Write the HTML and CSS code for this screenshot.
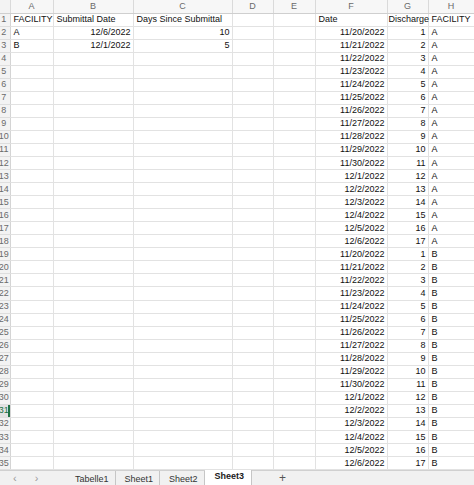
FILE: index.html
```html
<!DOCTYPE html>
<html>
<head>
<meta charset="utf-8">
<link rel="stylesheet" href="styles.css">
</head>
<body>
<div class="app">
<table class="grid">
<colgroup><col class="c0"><col class="ca"><col class="cb"><col class="cc"><col class="cd"><col class="ce"><col class="cf"><col class="cg"><col class="ch"></colgroup>
<thead><tr class="hdr"><th class="corner"></th><th>A</th><th>B</th><th>C</th><th>D</th><th>E</th><th>F</th><th>G</th><th>H</th></tr></thead>
<tbody>
<tr><th>1</th><td>FACILITY</td><td>Submittal Date</td><td>Days Since Submittal</td><td></td><td></td><td>Date</td><td class="tight">Discharge</td><td>FACILITY</td></tr>
<tr><th>2</th><td>A</td><td class="n">12/6/2022</td><td class="n">10</td><td></td><td></td><td class="n">11/20/2022</td><td class="n">1</td><td>A</td></tr>
<tr><th>3</th><td>B</td><td class="n">12/1/2022</td><td class="n">5</td><td></td><td></td><td class="n">11/21/2022</td><td class="n">2</td><td>A</td></tr>
<tr><th>4</th><td></td><td></td><td></td><td></td><td></td><td class="n">11/22/2022</td><td class="n">3</td><td>A</td></tr>
<tr><th>5</th><td></td><td></td><td></td><td></td><td></td><td class="n">11/23/2022</td><td class="n">4</td><td>A</td></tr>
<tr><th>6</th><td></td><td></td><td></td><td></td><td></td><td class="n">11/24/2022</td><td class="n">5</td><td>A</td></tr>
<tr><th>7</th><td></td><td></td><td></td><td></td><td></td><td class="n">11/25/2022</td><td class="n">6</td><td>A</td></tr>
<tr><th>8</th><td></td><td></td><td></td><td></td><td></td><td class="n">11/26/2022</td><td class="n">7</td><td>A</td></tr>
<tr><th>9</th><td></td><td></td><td></td><td></td><td></td><td class="n">11/27/2022</td><td class="n">8</td><td>A</td></tr>
<tr><th>10</th><td></td><td></td><td></td><td></td><td></td><td class="n">11/28/2022</td><td class="n">9</td><td>A</td></tr>
<tr><th>11</th><td></td><td></td><td></td><td></td><td></td><td class="n">11/29/2022</td><td class="n">10</td><td>A</td></tr>
<tr><th>12</th><td></td><td></td><td></td><td></td><td></td><td class="n">11/30/2022</td><td class="n">11</td><td>A</td></tr>
<tr><th>13</th><td></td><td></td><td></td><td></td><td></td><td class="n">12/1/2022</td><td class="n">12</td><td>A</td></tr>
<tr><th>14</th><td></td><td></td><td></td><td></td><td></td><td class="n">12/2/2022</td><td class="n">13</td><td>A</td></tr>
<tr><th>15</th><td></td><td></td><td></td><td></td><td></td><td class="n">12/3/2022</td><td class="n">14</td><td>A</td></tr>
<tr><th>16</th><td></td><td></td><td></td><td></td><td></td><td class="n">12/4/2022</td><td class="n">15</td><td>A</td></tr>
<tr><th>17</th><td></td><td></td><td></td><td></td><td></td><td class="n">12/5/2022</td><td class="n">16</td><td>A</td></tr>
<tr><th>18</th><td></td><td></td><td></td><td></td><td></td><td class="n">12/6/2022</td><td class="n">17</td><td>A</td></tr>
<tr><th>19</th><td></td><td></td><td></td><td></td><td></td><td class="n">11/20/2022</td><td class="n">1</td><td>B</td></tr>
<tr><th>20</th><td></td><td></td><td></td><td></td><td></td><td class="n">11/21/2022</td><td class="n">2</td><td>B</td></tr>
<tr><th>21</th><td></td><td></td><td></td><td></td><td></td><td class="n">11/22/2022</td><td class="n">3</td><td>B</td></tr>
<tr><th>22</th><td></td><td></td><td></td><td></td><td></td><td class="n">11/23/2022</td><td class="n">4</td><td>B</td></tr>
<tr><th>23</th><td></td><td></td><td></td><td></td><td></td><td class="n">11/24/2022</td><td class="n">5</td><td>B</td></tr>
<tr><th>24</th><td></td><td></td><td></td><td></td><td></td><td class="n">11/25/2022</td><td class="n">6</td><td>B</td></tr>
<tr><th>25</th><td></td><td></td><td></td><td></td><td></td><td class="n">11/26/2022</td><td class="n">7</td><td>B</td></tr>
<tr><th>26</th><td></td><td></td><td></td><td></td><td></td><td class="n">11/27/2022</td><td class="n">8</td><td>B</td></tr>
<tr><th>27</th><td></td><td></td><td></td><td></td><td></td><td class="n">11/28/2022</td><td class="n">9</td><td>B</td></tr>
<tr><th>28</th><td></td><td></td><td></td><td></td><td></td><td class="n">11/29/2022</td><td class="n">10</td><td>B</td></tr>
<tr><th>29</th><td></td><td></td><td></td><td></td><td></td><td class="n">11/30/2022</td><td class="n">11</td><td>B</td></tr>
<tr><th>30</th><td></td><td></td><td></td><td></td><td></td><td class="n">12/1/2022</td><td class="n">12</td><td>B</td></tr>
<tr><th class="sel">31</th><td></td><td></td><td></td><td></td><td></td><td class="n">12/2/2022</td><td class="n">13</td><td>B</td></tr>
<tr><th>32</th><td></td><td></td><td></td><td></td><td></td><td class="n">12/3/2022</td><td class="n">14</td><td>B</td></tr>
<tr><th>33</th><td></td><td></td><td></td><td></td><td></td><td class="n">12/4/2022</td><td class="n">15</td><td>B</td></tr>
<tr><th>34</th><td></td><td></td><td></td><td></td><td></td><td class="n">12/5/2022</td><td class="n">16</td><td>B</td></tr>
<tr><th>35</th><td></td><td></td><td></td><td></td><td></td><td class="n">12/6/2022</td><td class="n">17</td><td>B</td></tr>
</tbody>
</table>
<div class="tabbar">
  <div class="nav"><span class="arrow">‹</span><span class="arrow">›</span></div>
  <div class="tab">Tabelle1</div>
  <div class="tab">Sheet1</div>
  <div class="tab">Sheet2</div>
  <div class="tab active">Sheet3</div>
  <div class="add">+</div>
</div>
</div>
</body>
</html>
```
FILE: styles.css
```css
html, body {
  margin: 0;
  padding: 0;
  background: #ffffff;
}
body {
  width: 474px;
  height: 485px;
  overflow: hidden;
  font-family: "Liberation Sans", Arial, sans-serif;
  font-size: 9px;
  color: #111;
}
.app {
  display: flex;
  flex-direction: column;
  width: 474px;
  height: 485px;
  overflow: hidden;
}
.grid {
  border-collapse: collapse;
  table-layout: fixed;
  width: 476px;
  margin-left: -2px;
  flex: none;
}
.c0 { width: 12px; }
.ca { width: 43px; }
.cb { width: 80px; }
.cc { width: 99px; }
.cd { width: 41px; }
.ce { width: 42px; }
.cf { width: 72px; }
.cg { width: 41px; }
.ch { width: 46px; }

.grid tbody tr { height: 13.06px; }
.grid td, .grid th {
  padding: 0 2px 0 3px;
  height: 12px;
  line-height: 11px;
  white-space: nowrap;
  overflow: hidden;
  border-right: 1px solid #e2e2e2;
  border-bottom: 1px solid #e2e2e2;
  font-weight: normal;
  text-align: left;
  box-sizing: border-box;
}
.grid td.n { text-align: right; }
.grid td.tight { padding-left: 1px; overflow: visible; }
.grid tbody th {
  padding: 0;
  text-align: center;
  color: #6a6a6a;
  background: #f3f3f3;
  border-right: 1px solid #d4d4d4;
  border-bottom: 1px solid #dedede;
}
.grid tbody th.sel {
  color: #217346;
  background: #e3e3e3;
  box-shadow: inset -2px 0 0 #217346;
}
.grid thead tr { height: 13px; }
.grid thead th {
  line-height: 11px;
  padding: 0;
  text-align: center;
  color: #6a6a6a;
  background: #f7f7f7;
  border-right: 1px solid #dadada;
  border-bottom: 1px solid #cfcfcf;
}
.grid thead th.corner { background: #f3f3f3; }

.tabbar {
  flex: 1;
  display: flex;
  align-items: stretch;
  background: #f1f1f1;
  border-top: 1px solid #d0d0d0;
  color: #333;
}
.nav {
  width: 66px;
  display: flex;
  gap: 18px;
  padding: 1px 0 0 13px;
  box-sizing: border-box;
  color: #9a9a9a;
  font-size: 11px;
}
.arrow { line-height: 12px; }
.tab {
  padding: 3px 6px 0 9px;
  line-height: 11px;
  border-right: 1px solid #c6c6c6;
}
.tab.active {
  background: #ffffff;
  font-weight: bold;
  color: #1a1a1a;
  padding: 1px 7px 0 10px;
  margin-top: -1px;
  border-right: 1px solid #c6c6c6;
}
.add {
  padding: 1px 0 0 27px;
  font-size: 12px;
  line-height: 12px;
  color: #555;
}
```
